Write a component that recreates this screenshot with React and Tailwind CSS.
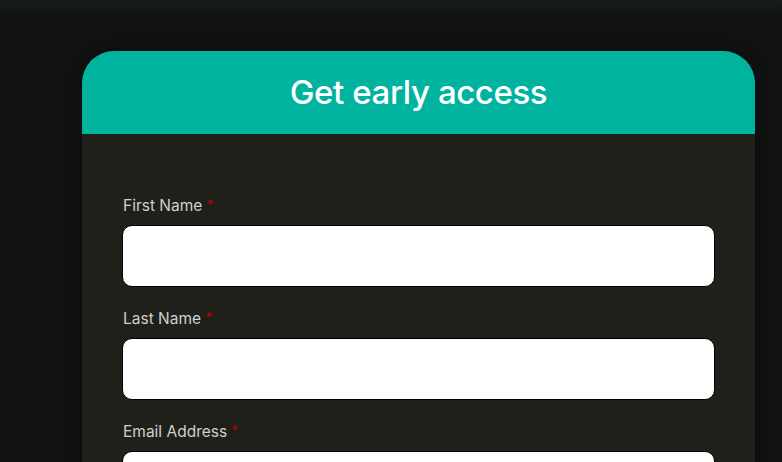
export default function App() {
  const fields = ["First Name", "Last Name", "Email Address"];
  return (
    <div className="w-[782px] h-[462px] overflow-hidden bg-[#111111] relative" style={{ fontFamily: "Inter, 'Noto Sans', sans-serif" }}>
      <div className="absolute top-0 left-0 right-0 h-[22px] bg-gradient-to-b from-[#141c1c] to-[#111111]" />
      <div className="pt-[51px] pl-[82px]">
        <div className="w-[673px] rounded-t-[32px] overflow-hidden shadow-[0_0_12px_rgba(0,0,0,0.4)]">
          <div className="h-[83px] bg-[#00b39f] flex items-center justify-center">
            <h1 className="text-white text-[33px] leading-none font-medium tracking-[-0.4px]">Get early access</h1>
          </div>
          <div className="bg-[#1f201a] px-[40px] pt-[62px] pb-[40px] flex flex-col">
            {fields.map((f) => (
              <div key={f} className="flex flex-col mb-[22px]">
                <label className="text-[#cfcfcf] text-[15.5px] leading-[20px] mb-[9px] pl-[1px]">
                  {f} <span className="text-[#c00000] text-[13px] align-top relative top-[-2px]">*</span>
                </label>
                <input className="h-[62px] w-[593px] bg-white border border-black rounded-[10px] outline-none" />
              </div>
            ))}
          </div>
        </div>
      </div>
    </div>
  );
}
